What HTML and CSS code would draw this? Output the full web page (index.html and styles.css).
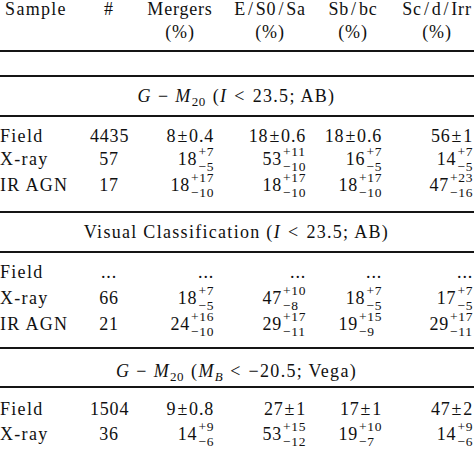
FILE: index.html
```html
<!DOCTYPE html>
<html>
<head>
<meta charset="utf-8">
<link rel="stylesheet" href="styles.css">
</head>
<body>
<div class="tbl">
  <div class="row hd h1">
    <div class="lbl">Sample</div><div>#</div><div>Mergers</div><div>E<span class="sl">/</span>S0<span class="sl">/</span>Sa</div><div>Sb<span class="sl">/</span>bc</div><div>Sc<span class="sl">/</span>d<span class="sl">/</span>Irr</div>
  </div>
  <div class="row hd h2 rule">
    <div></div><div></div><div>(%)</div><div>(%)</div><div>(%)</div><div>(%)</div>
  </div>
  <div class="row blank rule"></div>
  <div class="row t1 rule">
    <div class="title"><i>G</i><span class="op">−</span><i>M</i><span class="ix">20</span><span class="sp"></span>(<i>I</i><span class="rel">&lt;</span>23.5; AB)</div>
  </div>
  <div class="row s1a">
    <div class="lbl">Field</div><div>4435</div><div>8<span class="pm">±</span>0.4</div><div>18<span class="pm">±</span>0.6</div><div>18<span class="pm">±</span>0.6</div><div>56<span class="pm">±</span>1</div>
  </div>
  <div class="row s1b">
    <div class="lbl">X-ray</div><div>57</div>
    <div>18<span class="sc"><span>+7</span><span>−5</span></span></div>
    <div>53<span class="sc"><span>+11</span><span>−10</span></span></div>
    <div>16<span class="sc"><span>+7</span><span>−5</span></span></div>
    <div>14<span class="sc"><span>+7</span><span>−5</span></span></div>
  </div>
  <div class="row s1c rule">
    <div class="lbl">IR AGN</div><div>17</div>
    <div>18<span class="sc"><span>+17</span><span>−10</span></span></div>
    <div>18<span class="sc"><span>+17</span><span>−10</span></span></div>
    <div>18<span class="sc"><span>+17</span><span>−10</span></span></div>
    <div>47<span class="sc"><span>+23</span><span>−16</span></span></div>
  </div>
  <div class="row t2 rule">
    <div class="title">Visual Classification (<i>I</i><span class="rel">&lt;</span>23.5; AB)</div>
  </div>
  <div class="row s2a">
    <div class="lbl">Field</div><div>...</div><div>...</div><div>...</div><div>...</div><div>...</div>
  </div>
  <div class="row s2b">
    <div class="lbl">X-ray</div><div>66</div>
    <div>18<span class="sc"><span>+7</span><span>−5</span></span></div>
    <div>47<span class="sc"><span>+10</span><span>−8</span></span></div>
    <div>18<span class="sc"><span>+7</span><span>−5</span></span></div>
    <div>17<span class="sc"><span>+7</span><span>−5</span></span></div>
  </div>
  <div class="row s2c rule">
    <div class="lbl">IR AGN</div><div>21</div>
    <div>24<span class="sc"><span>+16</span><span>−10</span></span></div>
    <div>29<span class="sc"><span>+17</span><span>−11</span></span></div>
    <div>19<span class="sc"><span>+15</span><span>−9</span></span></div>
    <div>29<span class="sc"><span>+17</span><span>−11</span></span></div>
  </div>
  <div class="row t3 rule">
    <div class="title"><i>G</i><span class="op">−</span><i>M</i><span class="ix">20</span><span class="sp"></span>(<i>M</i><span class="ix"><i>B</i></span><span class="rel">&lt;</span>−20.5; Vega)</div>
  </div>
  <div class="row s3a">
    <div class="lbl">Field</div><div>1504</div><div>9<span class="pm">±</span>0.8</div><div>27<span class="pm">±</span>1</div><div>17<span class="pm">±</span>1</div><div>47<span class="pm">±</span>2</div>
  </div>
  <div class="row s3b">
    <div class="lbl">X-ray</div><div>36</div>
    <div>14<span class="sc"><span>+9</span><span>−6</span></span></div>
    <div>53<span class="sc"><span>+15</span><span>−12</span></span></div>
    <div>19<span class="sc"><span>+10</span><span>−7</span></span></div>
    <div>14<span class="sc"><span>+9</span><span>−6</span></span></div>
  </div>
</div>
</body>
</html>
```

FILE: styles.css
```css
html, body {
  margin: 0;
  padding: 0;
  background: #ffffff;
}

body {
  width: 474px;
  height: 449px;
  overflow: hidden;
  font-family: "Liberation Serif", "Times New Roman", serif;
  font-size: 18px;
  color: #111111;
  letter-spacing: 0.8px;
}

.tbl {
  width: 474px;
}

.row {
  display: grid;
  grid-template-columns: 72px 56px 86px 92px 76px 91px;
  box-sizing: border-box;
  line-height: 20px;
  white-space: nowrap;
}

.row > :nth-child(2) { padding-left: 18px; text-align: center; }
.row > :nth-child(3) { padding-left: 18px; text-align: right; }
.row > :nth-child(4) { padding-left: 20px; text-align: right; }
.row > :nth-child(5) { padding-left: 18px; text-align: right; }
.row > :nth-child(6) { padding-left: 19px; text-align: right; }

.hd > :nth-child(n) { text-align: center; }

.lbl {
  letter-spacing: 1.3px;
}

.rule {
  border-bottom: 2px solid #151515;
}

.title {
  grid-column: 1 / -1;
  text-align: center;
  padding-left: 0;
  letter-spacing: 1.3px;
}

.row > .title:nth-child(1) {
  text-align: center;
}

i {
  font-style: italic;
}

.sl { margin: 0 2px; }
.op { margin: 0 6px; }
.rel { margin: 0 7px; }
.sp { display: inline-block; width: 7px; }
.pm { margin: 0 1px; }

.ix {
  font-size: 13px;
  line-height: 0;
  vertical-align: -4px;
  letter-spacing: 0.5px;
}

.sc {
  display: inline-block;
  vertical-align: -6px;
  font-size: 13.5px;
  line-height: 15px;
  margin: -12px 0 -6px 1px;
  text-align: left;
  letter-spacing: 0.6px;
}

.sc > span {
  display: block;
}

/* row geometry */
.h1 { height: 18px; line-height: 18px; }
.h2 { height: 34px; padding-top: 4px; }
.blank { height: 25px; }
.t1 { height: 40px; padding-top: 9px; }
.s1a { height: 25px; padding-top: 9px; }
.s1b { height: 26px; padding-top: 6.5px; }
.s1c { height: 45px; padding-top: 6.5px; }
.t2 { height: 40px; padding-top: 8.5px; }
.s2a { height: 26px; padding-top: 9px; }
.s2b { height: 26px; padding-top: 9px; }
.s2c { height: 43.5px; padding-top: 9px; }
.t3 { height: 39.5px; padding-top: 12px; }
.s3a { height: 25px; padding-top: 11px; }
.s3b { height: 36px; padding-top: 11px; }
```
